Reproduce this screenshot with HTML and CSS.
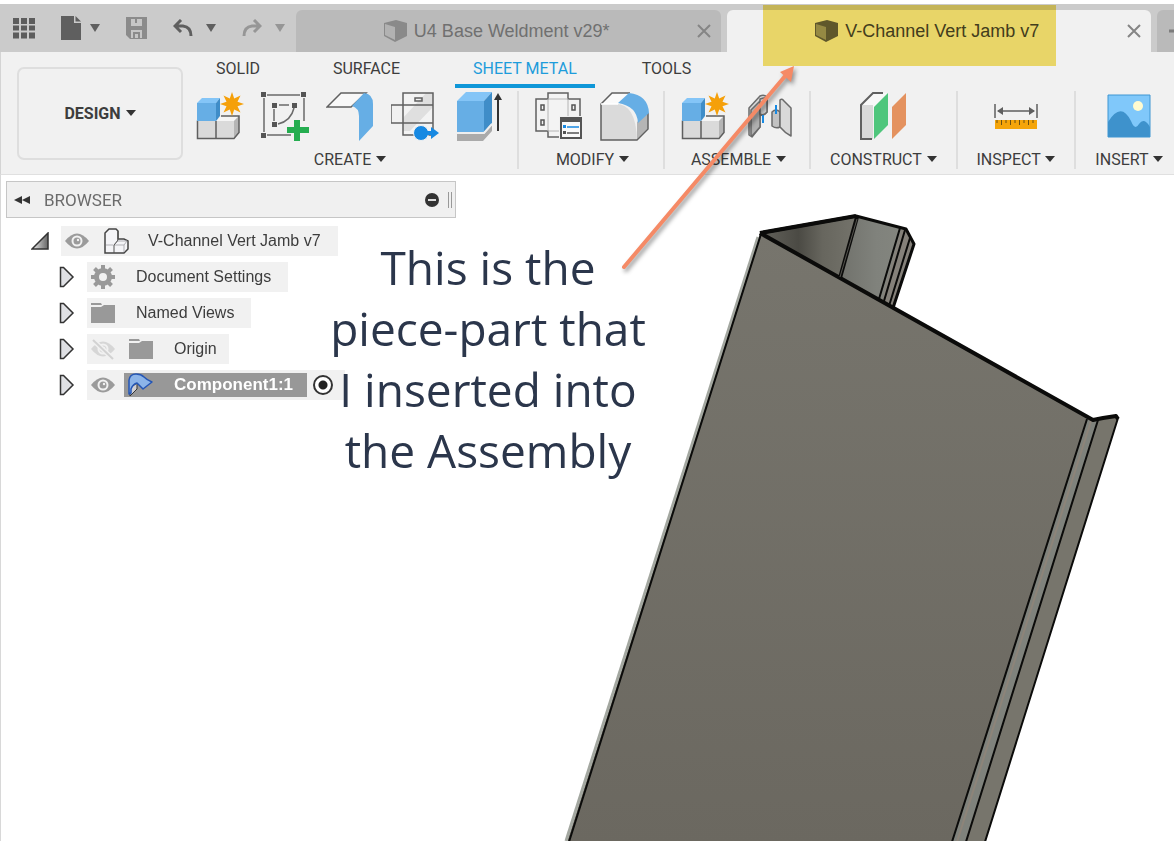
FILE: index.html
```html
<!DOCTYPE html>
<html lang="en">
<head>
<meta charset="utf-8">
<title>V-Channel Vert Jamb v7</title>
<link rel="stylesheet" href="styles.css">
</head>
<body>
<svg class="defs" width="0" height="0" aria-hidden="true">
  <symbol id="new-component" viewBox="0 0 48 48">
    <path d="M2 29h18v17H2zM20 29l5-5h18v17l-5 5H20z" fill="#dadada"/>
    <path d="M20 29l5-5h18l-5 5z" fill="#f5f5f5"/>
    <path d="M38 29l5-5v17l-5 5z" fill="#b5b5b5"/>
    <path d="M1.500 28.500V46.500H38l5-6V24H25M20 29v17" fill="none" stroke="#5f5f5f" stroke-width="1.500"/>
    <path d="M1 11l5-5h18l-4 5z" fill="#84c5f7"/>
    <path d="M1 11h19v18H1z" fill="#66aee5"/>
    <path d="M20 11l4-5v18l-4 5z" fill="#3f8dc8"/>
    <circle cx="36" cy="12" r="10" fill="#f1f1f1"/>
    <path d="M36 0l2.200 6.500L44.500 3.500 41.500 9.800 48 12l-6.500 2.200 3 6.300-6.300-3L36 24l-2.200-6.500-6.300 3 3-6.300L24 12l6.500-2.200-3-6.300 6.300 3z" fill="#f5a00a"/>
  </symbol>
  <symbol id="eye" viewBox="0 0 24 24">
    <path d="M0 12q12-15 24 0q-12 15-24 0z" fill="#9b9b9b"/>
    <circle cx="12" cy="12" r="4.500" fill="none" stroke="#f1f1f1" stroke-width="2"/>
    <circle cx="13" cy="11" r="1.200" fill="#f1f1f1"/>
  </symbol>
  <symbol id="folder" viewBox="0 0 24 24">
    <path d="M0 2h10l1 2H0zM0 6h10l3-2h11v18H0z" fill="#999"/>
  </symbol>
  <symbol id="expand" viewBox="0 0 16 22">
    <path d="M1.500 1.500h3l9.500 9.500-9.500 9.500h-3z" fill="#dfe0e4" stroke="#333" stroke-width="1.500"/>
  </symbol>
  <symbol id="close" viewBox="0 0 14 14">
    <path d="M1 1l12 12M13 1L1 13" stroke="currentColor" stroke-width="2"/>
  </symbol>
</svg>

<div class="app">
  <header class="titlebar">
    <div class="quick">
      <button class="tool" aria-label="Data panel"><svg width="22" height="22" viewBox="0 0 22 22" fill="#5d5d5d"><path d="M0 1h6v6H0zM8 1h6v6H8zM16 1h6v6h-6zM0 8.500h6v5H0zM8 8.500h6v5H8zM16 8.500h6v5h-6zM0 15.500h6v6H0zM8 15.500h6v6H8zM16 15.500h6v6h-6z"/></svg></button>
      <button class="tool" aria-label="File"><svg width="20" height="24" viewBox="0 0 20 24" fill="#5f5f5f"><path d="M0 0h13v7h7v17H0z"/><path d="M14.500 0l5.500 5.500h-5.500z"/></svg><i class="caret caret-dark"></i></button>
      <button class="tool" aria-label="Save"><svg width="21" height="22" viewBox="0 0 21 22"><path d="M0 0h21v22H4l-4-4z" fill="#8b8b8b"/><path d="M5 2h11v7H5zM5 13h11v8H5z" fill="#c6c6c6"/><path d="M9 2h2v4H9zM7 15h7v6H7z" fill="#8b8b8b"/><path d="M9 17h3v4H9z" fill="#c6c6c6"/></svg></button>
      <button class="tool tool-wide" aria-label="Undo"><svg width="20" height="18" viewBox="0 0 20 18" fill="none" stroke="#5f5f5f" stroke-width="3"><path d="M8 1L2 7l6 6M2 7h8q8 1 8 10"/></svg><i class="caret caret-dark"></i></button>
      <button class="tool tool-wide" aria-label="Redo"><svg width="20" height="18" viewBox="0 0 20 18" fill="none" stroke="#969696" stroke-width="3"><path d="M12 1l6 6-6 6M18 7h-8q-8 1-8 10"/></svg><i class="caret caret-light"></i></button>
    </div>
    <div class="doc-tab">
      <span class="doc-name"><svg width="25" height="24" viewBox="0 0 25 24"><path d="M1 4L13 1l11 3v13l-12 6L1 17z" fill="#8a8a8a"/><path d="M2 5l10 3v13L2 16z" fill="#b2b2b2"/></svg>U4 Base Weldment v29*</span>
      <button class="close" aria-label="Close tab"><svg width="14" height="14"><use href="#close"/></svg></button>
    </div>
    <div class="doc-tab doc-active">
      <span class="doc-name"><svg width="25" height="24" viewBox="0 0 25 24"><path d="M1 4L13 1l11 3v13l-12 6L1 17z" fill="#626262"/><path d="M2 5l10 3v13L2 16z" fill="#9b9b9b"/></svg>V-Channel Vert Jamb v7</span>
      <button class="close" aria-label="Close tab"><svg width="14" height="14"><use href="#close"/></svg></button>
    </div>
    <button class="add-tab" aria-label="New tab"><svg width="14" height="14" viewBox="0 0 14 14"><path d="M0 7h14M7 0v14" stroke="#7d7d7d" stroke-width="3"/></svg></button>
  </header>

  <section class="ribbon">
    <button class="workspace">DESIGN <i class="caret caret-small"></i></button>
    <div class="ribbon-main">
      <nav class="ribbon-tabs">
        <a href="#solid">SOLID</a>
        <a href="#surface">SURFACE</a>
        <a href="#sheet" class="selected">SHEET METAL</a>
        <a href="#tools">TOOLS</a>
      </nav>
      <div class="groups">
        <div class="group group-first">
          <div class="icons">
            <svg width="48" height="50" viewBox="0 0 48 48"><use href="#new-component"/></svg>
            <svg width="48" height="50" viewBox="0 0 48 50">
              <g fill="none" stroke="#6a6a6a" stroke-width="1.500"><path d="M6 4h33M3 7v34M43 7v23M6 44h24M18 14h10M13 18v12M33 17q-3 13-16 16"/></g>
              <path d="M0 1h5v5H0zM40 1h5v5h-5zM0 42h5v5H0zM11 12h5v5h-5zM31 12h5v5h-5zM11 31h5v5h-5z" fill="#555"/>
              <path d="M33 29h6v7h9v6h-9v8h-6v-8h-7v-6h7z" fill="#25ad50"/></svg>
            <svg width="48" height="50" viewBox="0 0 48 50"><path d="M15 2h25L25 16H1z" fill="#f8f8f8" stroke="#606060" stroke-width="1.500"/><path d="M38 2q9 1 9 11v22L33 50V25q0-8-7-10z" fill="#66aee5"/></svg>
            <svg width="48" height="50" viewBox="0 0 48 50"><path d="M12 2h30v42H12z" fill="#f3f3f3"/><path d="M35 2h7v14L19 40h-7V27z" fill="#dfdfdf"/><path d="M12 2h30v42H12zM0 14h42v18H0zM24 7h7v3h-7z" fill="none" stroke="#606060" stroke-width="1.500"/><circle cx="30" cy="42" r="7.500" fill="#1789e2" stroke="#f1f1f1"/><path d="M35 40h5v-4l8 6-8 6v-4h-5z" fill="#1789e2"/></svg>
            <svg width="48" height="50" viewBox="0 0 48 50"><path d="M1 43h27l8-9v6l-9 10H1z" fill="#aaa"/><path d="M1 10l9-9h26l-8 9z" fill="#84c5f7"/><path d="M1 10h27v31H1z" fill="#66aee5"/><path d="M28 10l8-9v31l-8 9z" fill="#3f8dc8"/><path d="M1 42h27l8-9" fill="none" stroke="#eee" stroke-width="2"/><path d="M42 8v32" stroke="#333" stroke-width="2"/><path d="M38 9l4-7 4 7z" fill="#333"/></svg>
          </div>
          <button class="group-label">CREATE <i class="caret caret-small"></i></button>
        </div>
        <div class="group group-pair">
          <div class="icons">
            <svg width="48" height="50" viewBox="0 0 48 50"><path d="M1 8h12V2h20v6h12v32H33v6H13v-6H1z" fill="#f3f3f3" stroke="#606060" stroke-width="1.500"/><path d="M13 8v32M33 8v32M13 8h20M13 40h20" stroke="#b4b4b4"/><path d="M6 14h3v5H6zM6 29h3v5H6zM37 14h3v5h-3z" fill="none" stroke="#555" stroke-width="1.500"/><path d="M24 25h24v25H24z" fill="#f1f1f1"/><path d="M26 27h20v20H26z" fill="#fafafa" stroke="#555" stroke-width="2"/><path d="M25 26h22v5H25z" fill="#555"/><path d="M32 36h12" stroke="#1789e2" stroke-width="1.500"/><path d="M32 42h12" stroke="#555" stroke-width="1.500"/><path d="M28 34h3v3h-3z" fill="#1789e2"/><path d="M28 40h3v3h-3z" fill="#555"/></svg>
            <svg width="50" height="50" viewBox="0 0 50 50"><path d="M1 13L12 2h18L19 14z" fill="#fafafa"/><path d="M1 13h15q20 0 21 36H1z" fill="#dadada"/><path d="M37 31l11-9v15L37 48z" fill="#b5b5b5"/><path d="M30 2H12L1 13v36h36l11-11V22" fill="none" stroke="#606060" stroke-width="1.500"/><path d="M1 13h17" stroke="#fff" stroke-width="1.500"/><path d="M29 2q19 2 20 20l-11 10q-1-17-20-20z" fill="#66aee5"/></svg>
          </div>
          <button class="group-label">MODIFY <i class="caret caret-small"></i></button>
        </div>
        <div class="group group-pair">
          <div class="icons">
            <svg width="48" height="50" viewBox="0 0 48 48"><use href="#new-component"/></svg>
            <svg width="50" height="50" viewBox="0 0 50 50"><g stroke="#6b6b6b" stroke-width="1.500" stroke-linejoin="round"><path d="M3 17L14 5q4-2 7 1v15q-3 4-7 3v12L6 46l-3-2z" fill="#d8d8d8"/><path d="M5 19l9-9v26L6 45l-1-1z" fill="#b0b0b0"/><path d="M14 8l7-2v15q-3 4-7 2z" fill="#cfcfcf"/><path d="M26 21q4-4 8 0v15q-4 2-8-1z" fill="#c2c2c2"/><path d="M34 9q2-2 4 1l7 7v28q-6-3-11-9z" fill="#d9d9d9"/></g><path d="M17 24v8M30 14v9" stroke="#1789e2" stroke-width="2"/></svg>
          </div>
          <button class="group-label">ASSEMBLE <i class="caret caret-small"></i></button>
        </div>
        <div class="group">
          <div class="icons"><svg width="48" height="50" viewBox="0 0 48 50"><path d="M2 14L14 2h14L14 18v30H2z" fill="#f8f8f8"/><path d="M2 14h12v34H2z" fill="#d9d9d9"/><path d="M24 2H14L2 14v34h11" fill="none" stroke="#606060" stroke-width="2"/><path d="M15 16L29 2v32L15 48z" fill="#4fc67c"/><path d="M33 16L47 2v32L33 48z" fill="#e4925f"/></svg></div>
          <button class="group-label">CONSTRUCT <i class="caret caret-small"></i></button>
        </div>
        <div class="group">
          <div class="icons"><svg width="44" height="50" viewBox="0 0 44 50"><path d="M1 13v14M43 13v14M4 20h36" stroke="#5f5f5f" stroke-width="1.500"/><path d="M3 20l6-4v8zM41 20l-6-4v8z" fill="#5f5f5f"/><path d="M1 29h42v9H1z" fill="#f5a50a"/><path d="M3 29v3M7.500 29v5M12 29v3M16.500 29v5M21 29v3M25.500 29v5M30 29v3M34.500 29v5M39 29v3" stroke="#6d5010"/></svg></div>
          <button class="group-label">INSPECT <i class="caret caret-small"></i></button>
        </div>
        <div class="group">
          <div class="icons"><svg width="44" height="50" viewBox="0 0 44 50"><path d="M1 4h42v42H1z" fill="#80c8fa"/><path d="M1 31Q14 10 24 30q4 10 8 3 5-7 11 3v10H1z" fill="#3e92cc"/><circle cx="31" cy="15" r="5" fill="#fffbd0"/><path d="M1 4h42v42H1z" fill="none" stroke="#3f96d2"/></svg></div>
          <button class="group-label">INSERT <i class="caret caret-small"></i></button>
        </div>
      </div>
    </div>
  </section>

  <main class="stage">
    <svg class="model" width="614" height="666" viewBox="560 175 614 666" aria-label="Sheet metal model">
      <defs>
        <linearGradient id="face" x1="0" y1="0" x2="0" y2="1"><stop offset="0" stop-color="#77756d"/><stop offset="1" stop-color="#6b6860"/></linearGradient>
        <linearGradient id="inner" x1="0" y1="0" x2="1" y2="0"><stop offset="0" stop-color="#64635c"/><stop offset=".4" stop-color="#4b4a44"/><stop offset=".65" stop-color="#67665e"/><stop offset="1" stop-color="#74736b"/></linearGradient>
        <linearGradient id="flange" x1="0" y1="0" x2="1" y2="0"><stop offset="0" stop-color="#70716b"/><stop offset=".5" stop-color="#80827c"/><stop offset="1" stop-color="#858780"/></linearGradient>
      </defs>
      <path d="M760 233L856 216 839 278z" fill="url(#inner)"/>
      <path d="M856 216l50 13 8 15-21 64-54-30z" fill="url(#flange)"/>
      <path d="M901 229l5 1 8 14-21 64-11-8z" fill="#85817a"/>
      <path d="M760 233l333 187 25-3L984 845H566z" fill="url(#face)"/>
      <path d="M1098 420l20-3L984 845H965z" fill="#77756c"/>
      <path d="M1087 420l11 1L965 845H951z" fill="#7f827c"/>
      <path d="M1091 421L956 845" stroke="#8d8479" stroke-width="2"/>
      <path d="M758 237L566 841" stroke="#a3a7a0" stroke-width="3"/>
      <g fill="none" stroke="#0b0b0a" stroke-linejoin="round">
        <path d="M760 233l96-17 50 13 8 15-21 64" stroke-width="3"/>
        <path d="M760 233l96-17" stroke-width="4"/>
        <path d="M760 233l333 187 10-2 13-2 2 3" stroke-width="4"/>
        <path d="M857 217l-17 61" stroke-width="4"/>
        <path d="M857 219l-17 58" stroke="#55544f"/>
        <path d="M900 228l-21 71M905 230l-21 71M910 238l-21 68" stroke-width="2"/>
        <path d="M761 234L568 845M1087 419L951 845M1098 420L965 845M1118 418L984 845" stroke-width="2"/>
      </g>
    </svg>

    <aside class="browser">
      <div class="browser-head">
        <button class="bare" aria-label="Collapse"><svg width="16" height="12" viewBox="0 0 16 12"><path d="M8 2v8L0 6zM16 2v8L8 6z" fill="#333"/></svg></button>
        <h2>BROWSER</h2>
        <button class="bare" aria-label="Hide all"><svg width="14" height="14" viewBox="0 0 14 14"><circle cx="7" cy="7" r="7" fill="#333"/><path d="M3 7h8" stroke="#ddd" stroke-width="2"/></svg></button>
        <span class="grip"></span>
      </div>
      <ul class="tree">
        <li class="root">
          <button class="bare" aria-label="Collapse document"><svg width="18" height="18" viewBox="0 0 18 18"><defs><linearGradient id="tri"><stop offset="0" stop-color="#eee"/><stop offset="1" stop-color="#666"/></linearGradient></defs><path d="M1 17L17 1v16z" fill="url(#tri)" stroke="#333" stroke-width="1.500"/></svg></button>
          <div class="node"><svg width="24" height="24"><use href="#eye"/></svg><svg class="part" width="26" height="26" viewBox="0 0 26 26"><path d="M2 5l4-4h7l2 2v8h6l4 2v8l-4 4H2z" fill="#f4f4f7" stroke="#444" stroke-width="1.500"/><path d="M3 17h7M11 17l4-4h9l-3 4zM21 17v7" fill="none" stroke="#b1b1b6"/><path d="M11 25v-8l4-5V3" fill="none" stroke="#555"/></svg><span>V-Channel Vert Jamb v7</span></div>
        </li>
        <li>
          <button class="bare" aria-label="Expand settings"><svg width="16" height="22"><use href="#expand"/></svg></button>
          <div class="node"><svg width="24" height="24" viewBox="0 0 24 24"><circle cx="12" cy="12" r="6.500" fill="none" stroke="#999" stroke-width="5"/><path d="M12 0v5M12 19v5M0 12h5M19 12h5M3.500 3.500L7 7M17 17l3.500 3.500M20.500 3.500L17 7M7 17l-3.500 3.500" stroke="#999" stroke-width="4"/></svg><span>Document Settings</span></div>
        </li>
        <li>
          <button class="bare" aria-label="Expand views"><svg width="16" height="22"><use href="#expand"/></svg></button>
          <div class="node"><svg width="24" height="24"><use href="#folder"/></svg><span>Named Views</span></div>
        </li>
        <li class="deep">
          <button class="bare" aria-label="Expand origin"><svg width="16" height="22"><use href="#expand"/></svg></button>
          <div class="node"><svg width="24" height="24" viewBox="0 0 24 24"><g opacity=".3"><use href="#eye"/></g><path d="M2 3l20 19" stroke="#f1f1f1" stroke-width="5"/><path d="M2 3l20 19" stroke="#d2d2d2" stroke-width="2"/></svg><svg width="24" height="24"><use href="#folder"/></svg><span>Origin</span></div>
        </li>
        <li class="deep">
          <button class="bare" aria-label="Expand component"><svg width="16" height="22"><use href="#expand"/></svg></button>
          <div class="node node-active"><svg width="24" height="24"><use href="#eye"/></svg>
            <div class="picked"><svg width="25" height="24" viewBox="0 0 25 24"><path d="M2 15l7-5v6l-7 7z" fill="#d0d0d4" stroke="#333"/><path d="M1 21V7q1-6 7-6 5 0 8 3t8 5l-9 7-6-6q-4 1-6 6v4z" fill="#8cb4e8" stroke="#2556b5" stroke-width="1.500" stroke-linejoin="round"/></svg><span>Component1:1</span></div>
            <input type="radio" checked aria-label="Activate Component1:1">
          </div>
        </li>
      </ul>
    </aside>
    <p class="note">This is the piece-part that I&nbsp;inserted into the Assembly</p>
  </main>

  <div class="highlight"></div>
  <svg class="arrow" width="190" height="220" viewBox="615 60 190 220" aria-hidden="true">
    <g class="arrow-line"><path d="M624 267L786 75" stroke="#f58a66" stroke-width="4" stroke-linecap="round"/><path d="M794 66l-14 6 11 10z" fill="#f58a66"/></g>
  </svg>
</div>
</body>
</html>
```
FILE: styles.css
```css
* { box-sizing: border-box; }
body { margin: 0; background: #fff; color: #3d3d3d; font: 16px/20px "Liberation Sans", Arial, sans-serif; }
button { border: 0; padding: 0; background: none; color: inherit; font: inherit; }
svg { display: block; flex: none; }
.defs { position: absolute; }
.app { position: relative; display: flex; flex-direction: column; min-height: 100vh; overflow: hidden; padding-top: 4px; isolation: isolate; }

.titlebar { display: flex; align-items: flex-end; gap: 6px; height: 48px; background: #cbcbcb; }
.quick { flex: none; display: flex; align-items: center; justify-content: space-between; width: 290px; height: 48px; padding: 0 5px 0 13px; }
.tool { display: flex; align-items: center; gap: 9px; }
.tool-wide { gap: 13px; }
.tool .caret { margin-left: 0; }
.caret { display: inline-block; border: 5px solid transparent; border-bottom: 0; border-top: 8px solid #333; }
.caret-dark { border-top-color: #5f5f5f; }
.caret-light { border-top-color: #969696; }
.caret-small { border-width: 6px 5px 0; margin-left: 1px; vertical-align: 3px; }
.doc-tab { flex: 1 1 0; display: flex; align-items: center; height: 42px; padding-right: 10px; border-radius: 6px 6px 0 0; background: #bababa; color: #707070; font-size: 18px; }
.doc-active { background: #f1f1f1; color: #444; }
.doc-name { flex: 1; display: flex; align-items: center; justify-content: center; gap: 6px; white-space: nowrap; }
.close { color: #858585; }
.add-tab { width: 17px; height: 42px; padding-left: 12px; overflow: hidden; border-radius: 6px 0 0; background: #bababa; }

.ribbon { display: flex; height: 123px; overflow: hidden; border-left: 1px solid #d4d4d4; border-bottom: 1px solid #e0e0e0; background: #f1f1f1; font-family: Roboto, sans-serif; }
.workspace { flex: none; width: 166px; height: 93px; margin: 15px 5px 0 16px; border: 2px solid #dedede; border-radius: 7px; font-weight: 700; }
.ribbon-main { flex: none; }
.ribbon-tabs { display: flex; padding-left: 10px; height: 36px; }
.ribbon-tabs a { height: 36px; padding: 7px 18px 0; border-bottom: 4px solid transparent; color: inherit; text-decoration: none; }
.ribbon-tabs a + a { margin-left: 37px; }
.ribbon-tabs .selected + a { margin-left: 29px; }
.ribbon-tabs .selected { border-color: #0f97d8; color: #1d9cdb; }
.groups { display: flex; margin-top: 3px; }
.group { display: flex; flex-direction: column; align-items: center; height: 78px; padding: 0 19px; border-left: 2px solid #dedede; }
.group-first { border-left: 0; padding: 0 13px 0 8px; }
.group-pair { padding: 0 13px 0 16px; }
.icons { display: flex; gap: 17px; height: 50px; }
.group-label { height: 20px; margin-top: 9px; white-space: nowrap; }

.stage { position: relative; flex: 1; border-left: 1px solid #d8d8d8; }
.model { position: absolute; left: 559px; top: 0; }
.browser { width: 455px; padding: 6px 0 0 5px; }
.browser-head { display: flex; align-items: center; height: 37px; padding: 0 3px 0 7px; border: 1px solid #c6c6c6; background: #f0f0f0; }
.browser-head h2 { flex: 1; margin: 0 0 0 14px; color: #6b6b6b; font: 17px/20px Roboto, sans-serif; }
.grip { width: 4px; height: 16px; margin-left: 9px; border: solid #999; border-width: 0 1px; }
.tree { display: grid; gap: 6px; margin: 8px 0 0; padding: 0; list-style: none; }
.tree li { display: flex; align-items: center; gap: 12px; padding-left: 53px; }
.tree .root { padding-left: 25px; }
.bare { display: flex; }
.node { display: flex; align-items: center; height: 30px; padding: 0 17px 0 4px; background: #f1f1f1; white-space: nowrap; }
.deep .node { padding-right: 12px; }
.node > span { margin-left: 21px; }
.node > .part + span { margin-left: 19px; }
.node > svg + svg { margin-left: 14px; }
.picked { display: flex; align-items: center; gap: 21px; height: 24px; margin-left: 9px; padding: 0 14px 0 4px; background: #989898; color: #fff; font-size: 17px; font-weight: 700; }
.node-active input { appearance: none; width: 20px; height: 20px; margin: 0 0 0 6px; border: 2px solid #333; border-radius: 50%; background: radial-gradient(circle, #222 0 4px, #fff 5px); }

.note { position: absolute; left: 312px; top: 62px; width: 350px; margin: 0; color: #2b364b; font: 500 46px/61px "Open Sans", "Noto Sans", sans-serif; text-align: center; }
.highlight { position: absolute; left: 763px; top: 5px; width: 293px; height: 61px; background: #f6e26e; mix-blend-mode: multiply; }
.arrow { position: absolute; left: 615px; top: 60px; pointer-events: none; }
.arrow-line { filter: drop-shadow(2px 3px 2px #0006); }
```
